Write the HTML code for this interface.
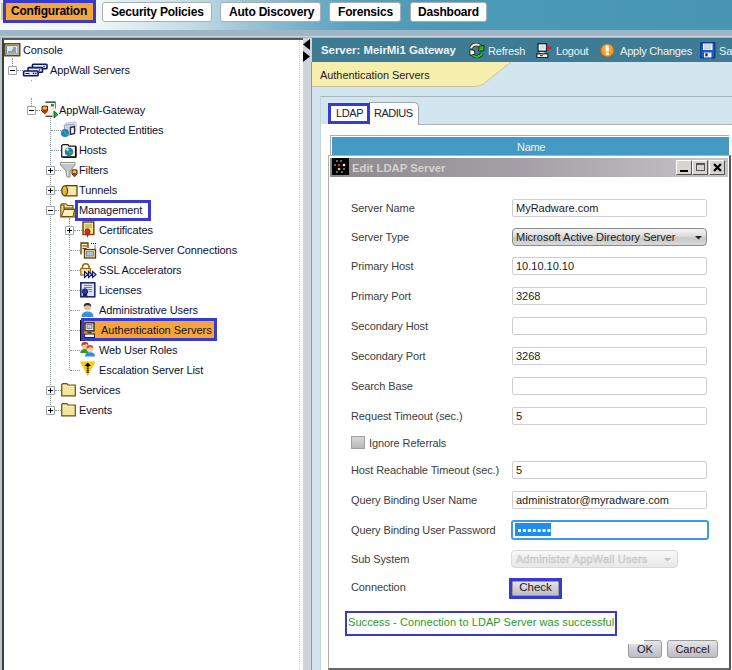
<!DOCTYPE html>
<html><head><meta charset="utf-8">
<style>
*{margin:0;padding:0;box-sizing:border-box}
html,body{width:732px;height:670px;overflow:hidden;background:#d3e5ee;font-family:"Liberation Sans",sans-serif;font-size:11px;color:#222}
.a{position:absolute}
.t{position:absolute;white-space:nowrap;line-height:12px;font-size:11px}
#top{left:0;top:0;width:732px;height:30px;background:linear-gradient(90deg,#f6f9fb 0px,#eef4f7 100px,#c4dce6 190px,#8cbcd0 270px,#5aa2c0 350px,#4b9ab8 430px,#4896b4 732px)}
.btn{position:absolute;top:2px;height:20px;background:#fff;border:1px solid #a9b0b3;border-radius:3px;font-weight:bold;font-size:12px;letter-spacing:-0.2px;line-height:17px;color:#000;white-space:nowrap}
#band{left:0;top:30px;width:732px;height:8px;background:#9fb6c8}
#bandl{left:0;top:36px;width:732px;height:1px;background:#c9d6dc}
#lp{left:0;top:38px;width:303px;height:632px;background:#fff;border-left:4px solid #353d3d;border-top:2px solid #535b58}
#lpe{left:0;top:38px;width:2px;height:632px;background:#bcc6c8}
#div{left:303px;top:38px;width:9px;height:632px;background:#cfd4dc}
#rp{left:312px;top:38px;width:420px;height:632px;background:#d3e5ee}
#hdr{left:312px;top:38px;width:420px;height:24px;background:#3f7b92}
.ht{color:#eef4f6;position:absolute;white-space:nowrap;line-height:12px}
.tree{color:#0c1030}.tree .t{letter-spacing:-0.1px}
.dl{position:absolute;border-left:1px dotted #8a9aa0}
.dh{position:absolute;border-top:1px dotted #8a9aa0}
.pm{position:absolute;width:9px;height:9px;border:1px solid #9aa6ac;background:#fff;border-radius:1px}
.pm:before{content:"";position:absolute;left:1px;top:3px;width:5px;height:1px;background:#000}
.pm.p:after{content:"";position:absolute;left:3px;top:1px;width:1px;height:5px;background:#000}
.lbl{color:#3c3c3c;letter-spacing:-0.1px}
.inp{position:absolute;left:512px;width:195px;height:18px;border:1px solid #d4ccd4;border-radius:2px;background:#fff}
.iv{position:absolute;left:516px;color:#1a1a1a;white-space:nowrap;line-height:12px}
.gbtn{position:absolute;border:1px solid #9a9a9a;border-radius:3px;background:linear-gradient(#e6e6ea,#cfcfd4 50%,#bcbcc4);color:#1a1a1a;text-align:center;line-height:15px}
</style></head><body>
<!-- top bar -->
<div id="top" class="a"></div>
<div class="a" style="left:1px;top:3px;width:2px;height:17px;background:#d8c88a"></div>
<div class="a" style="left:3px;top:0px;width:93px;height:23px;background:#3a3ac8"></div>
<div class="a" style="left:6px;top:3px;width:87px;height:17px;background:#f6a53b"></div>
<div class="t" style="left:11px;top:5px;font-weight:bold;font-size:12px;letter-spacing:-0.2px;color:#000">Configuration</div>
<div class="btn" style="left:102px;width:110px;"><span class="a" style="left:8px;top:1px">Security Policies</span></div>
<div class="btn" style="left:220px;width:101px;"><span class="a" style="left:8px;top:1px">Auto Discovery</span></div>
<div class="btn" style="left:329px;width:72px;"><span class="a" style="left:8px;top:1px">Forensics</span></div>
<div class="btn" style="left:410px;width:77px;"><span class="a" style="left:7px;top:1px">Dashboard</span></div>
<div id="band" class="a"></div>
<div id="bandl" class="a"></div>

<!-- left panel -->
<div id="lp" class="a"></div>
<div id="lpe" class="a"></div>
<div class="a" style="left:299px;top:40px;width:1px;height:630px;border-left:1px dotted #d8c8c8"></div>
<div id="div" class="a"></div>
<svg class="a" style="left:301px;top:38px" width="10" height="26"><path d="M9 1 L2 6.5 L9 12 Z" fill="#000"/><path d="M2 13 L9 18.5 L2 24 Z" fill="#000"/></svg>
<div class="a" style="left:311px;top:62px;width:1px;height:608px;background:#8c9ab4"></div>

<!-- tree -->
<div class="tree">
<svg class="a" style="left:4px;top:43px" width="17" height="14"><rect x="0.75" y="0.75" width="15" height="12" fill="#f2e6a0" stroke="#6a4a10" stroke-width="1.5"/><rect x="2.5" y="2.5" width="11.5" height="8.5" fill="#dde6f6" stroke="#5a8ac0" stroke-width="1"/><path d="M9 5h3M8 7h4M4 9h8" stroke="#556" stroke-width="1"/></svg>
<div class="t" style="left:23px;top:44px">Console</div>
<div class="dl" style="left:12px;top:58px;height:8px"></div>
<div class="pm" style="left:8px;top:66px"></div>
<div class="dh" style="left:17px;top:70px;width:6px"></div>
<svg class="a" style="left:22px;top:63px" width="27" height="14"><rect x="10.5" y="1.2" width="14.5" height="4.6" rx="0.8" fill="#e4e8fa" stroke="#0c1a5a" stroke-width="1.6"/><circle cx="22" cy="3.6" r="0.8" fill="#0c1a5a"/><rect x="6" y="4.6" width="14.5" height="4.6" rx="0.8" fill="#e4e8fa" stroke="#0c1a5a" stroke-width="1.6"/><circle cx="17.5" cy="7" r="0.8" fill="#0c1a5a"/><rect x="1.6" y="8" width="14.5" height="4.8" rx="0.8" fill="#e4e8fa" stroke="#0c1a5a" stroke-width="1.6"/><path d="M3.5 10.5h4" stroke="#0c1a5a" stroke-width="1"/><circle cx="11.5" cy="10.4" r="0.8" fill="#0c1a5a"/><circle cx="13.8" cy="10.4" r="0.8" fill="#0c1a5a"/></svg>
<div class="t" style="left:50px;top:64px">AppWall Servers</div>
<div class="a" style="left:31px;top:80px;width:1px;height:1px;background:#8a9a90"></div>
<div class="dl" style="left:31px;top:98px;height:8px"></div>
<div class="pm" style="left:27px;top:106px"></div>
<div class="dh" style="left:36px;top:110px;width:6px"></div>
<svg class="a" style="left:41px;top:101px" width="18" height="18"><path d="M4.5 1.2h9.5v6.5" fill="none" stroke="#223" stroke-width="1.2"/><rect x="5" y="2" width="9" height="13" fill="#f4f0e4"/><rect x="10" y="3" width="3" height="2.5" fill="#18a018"/><path d="M4.5 15.3h7" stroke="#333" stroke-width="1.2"/><path d="M1 5.5 Q3.5 4.5 6.5 5.5 L6.5 9.5 Q5.5 12 3.7 12.5 Q1.5 11.5 1 9.5 Z" fill="#f0c020" stroke="#302010" stroke-width="1"/><path d="M1.5 8.5 L6 8.5 L6 10 Q5 12 3.7 12 Q2 11 1.5 10Z" fill="#c02818"/><path d="M13 10 L17 13.5 L13 17 Z" fill="#20b030" stroke="#0a4a20" stroke-width="0.8"/></svg>
<div class="t" style="left:59px;top:104px">AppWall-Gateway</div>
<div class="dl" style="left:50px;top:118px;height:289px"></div>
<div class="dh" style="left:51px;top:130px;width:10px"></div>
<div class="dh" style="left:51px;top:150px;width:10px"></div>
<div class="dh" style="left:55px;top:170px;width:6px"></div>
<div class="dh" style="left:55px;top:190px;width:6px"></div>
<div class="dh" style="left:55px;top:210px;width:6px"></div>
<div class="dh" style="left:55px;top:390px;width:6px"></div>
<div class="dh" style="left:55px;top:410px;width:6px"></div>
<div class="pm p" style="left:46px;top:166px"></div>
<div class="pm p" style="left:46px;top:186px"></div>
<div class="pm " style="left:46px;top:206px"></div>
<div class="pm p" style="left:46px;top:386px"></div>
<div class="pm p" style="left:46px;top:406px"></div>
<svg class="a" style="left:60px;top:121px" width="18" height="17"><path d="M6 2 L16 1 L16 10 L8 13Z" fill="#e8ecf4" stroke="#b8c0d0" stroke-width="1"/><path d="M4 4 L14 3 L14 12 L6 15Z" fill="#c8d0e4" stroke="#9aa4c0" stroke-width="1"/><circle cx="5" cy="12" r="4" fill="#2a7ad0"/><path d="M3 10 q2 0 2 2 q1 2 3 1" stroke="#40b040" stroke-width="1.5" fill="none"/><path d="M10.5 6.5 L14.5 5.5 L14.5 12.5 L10.5 13.5Z" fill="#f8f8ff" stroke="#2a2a40" stroke-width="1.3"/></svg>
<div class="t" style="left:79px;top:124px">Protected Entities</div>
<svg class="a" style="left:61px;top:144px" width="16" height="14"><path d="M0.7 1.5 L2 0.7 H7 L8 2.2 H14.5 V12.8 H0.7Z" fill="#f8f8f8" stroke="#1a1a1a" stroke-width="1.2"/><path d="M1.5 13.3 H15.2 V2.5" fill="none" stroke="#000" stroke-width="1"/><circle cx="8" cy="7.8" r="4.3" fill="#2a70d8"/><path d="M5 5.5 q2.5 -1 2.5 2 q2 2.5 4.5 0.5" stroke="#38b038" stroke-width="1.8" fill="none"/><circle cx="6.5" cy="5.5" r="1.2" fill="#f0f0a0"/></svg>
<div class="t" style="left:79px;top:144px">Hosts</div>
<svg class="a" style="left:60px;top:162px" width="18" height="16"><path d="M0.5 0.5 H15 V3 L10 9 V15 L7 15 L6 9 L0.5 3Z" fill="#c4c4c4" stroke="#8a8a8a" stroke-width="1"/><path d="M1 1.5 H14.5" stroke="#f0f0f0" stroke-width="1"/><path d="M7.5 9 L8 14.5" stroke="#eee" stroke-width="1"/><path d="M12 8 Q14.5 7.5 17 8 L17 11.5 Q16 14 14.5 14.5 Q13 14 12 11.5Z" fill="#f0c030" stroke="#302018" stroke-width="1"/><path d="M12.3 11 H16.7 Q16 13.6 14.5 14 Q13 13.6 12.3 11Z" fill="#c02818"/></svg>
<div class="t" style="left:79px;top:164px">Filters</div>
<svg class="a" style="left:61px;top:185px" width="17" height="12"><path d="M3.5 0.7 H16 V10.8 H3.5" fill="#f4e29a" stroke="#5a4010" stroke-width="1.2"/><ellipse cx="3.6" cy="5.75" rx="2.9" ry="5" fill="#e0b848" stroke="#5a4010" stroke-width="1.2"/><path d="M8 3 h6 M8 6 h6 M8 8.5h6" stroke="#fff6c8" stroke-width="1"/></svg>
<div class="t" style="left:79px;top:184px">Tunnels</div>
<svg class="a" style="left:60px;top:203px" width="16" height="15"><path d="M1 2 L2 0.8 H6 L7.5 2.5 H13 V5 H1Z" fill="#f4e6a0" stroke="#6a5010" stroke-width="1.1"/><path d="M0.8 14 V2 H4 V6 H15 V14Z" fill="#f0dc88" stroke="#6a5010" stroke-width="1.1"/><path d="M4 6.5 H14.5 L13 13.5 H1.5Z" fill="#fbf0c0" stroke="#6a5010" stroke-width="1"/></svg>
<div class="a" style="left:75px;top:200px;width:76px;height:21px;border:3px solid #3a3ad0;background:#fff"></div>
<div class="t" style="left:79px;top:204px">Management</div>
<div class="dl" style="left:69px;top:218px;height:152px"></div>
<div class="pm p" style="left:65px;top:226px"></div>
<div class="dh" style="left:74px;top:230px;width:8px"></div>
<div class="dh" style="left:70px;top:250px;width:10px"></div>
<div class="dh" style="left:70px;top:270px;width:10px"></div>
<div class="dh" style="left:70px;top:290px;width:10px"></div>
<div class="dh" style="left:70px;top:310px;width:10px"></div>
<div class="dh" style="left:70px;top:330px;width:10px"></div>
<div class="dh" style="left:70px;top:350px;width:10px"></div>
<div class="dh" style="left:70px;top:370px;width:10px"></div>
<svg class="a" style="left:82px;top:221px" width="13" height="18"><rect x="1" y="1" width="10.8" height="12.5" fill="#f8e49a" stroke="#6a4a10" stroke-width="1.5"/><path d="M3 4h7M3 6h7M3 8h4" stroke="#a8a040" stroke-width="1"/><circle cx="5.5" cy="10.5" r="2.6" fill="#d83020" stroke="#801010" stroke-width="0.8"/><path d="M4 12.5 L5.5 17 L7 12.5Z" fill="#c02020"/></svg>
<div class="t" style="left:99px;top:224px">Certificates</div>
<svg class="a" style="left:80px;top:242px" width="17" height="17"><path d="M1 12.5 V1 H8 V6" fill="#f8eab0" stroke="#5a4010" stroke-width="1.3"/><path d="M2.5 4h4.5M2.5 6.5h4" stroke="#5a4010" stroke-width="1.2"/><path d="M11 1.5h1M13 1.5h1M15 1.5h1M15 3.5v1M15 5.5v1" stroke="#000" stroke-width="1"/><rect x="4.5" y="7.5" width="11" height="8.5" fill="#f8e8a0" stroke="#5a4010" stroke-width="1.3"/><rect x="6.5" y="9.5" width="7" height="4.5" fill="#a8c0e8" stroke="#6a80b0" stroke-width="0.8"/></svg>
<div class="t" style="left:99px;top:244px">Console-Server Connections</div>
<svg class="a" style="left:80px;top:262px" width="17" height="17"><path d="M2.5 6.5 V4.5 A3.3 3.3 0 0 1 9 4.5 V6.5" fill="none" stroke="#9a6a10" stroke-width="1.6"/><rect x="0.8" y="6.5" width="9.5" height="6.5" fill="#f8e8a0" stroke="#9a6a10" stroke-width="1.2"/><path d="M4.5 9.5 L8 12.5 L4.5 15.5Z M8.5 9.5 L12 12.5 L8.5 15.5Z M12.5 9.5 L16 12.5 L12.5 15.5Z" fill="#c8d8f0" stroke="#101a6a" stroke-width="1.1"/></svg>
<div class="t" style="left:99px;top:264px">SSL Accelerators</div>
<svg class="a" style="left:80px;top:282px" width="16" height="16"><rect x="0.8" y="0.8" width="14" height="14" fill="#dde4f8" stroke="#1a2060" stroke-width="1.5"/><path d="M4 3.5h8M4 5.5h8M8 7.5h4M9 9.5h3" stroke="#6a80c0" stroke-width="1"/><circle cx="5" cy="9.5" r="2.8" fill="#2a3890" stroke="#101860" stroke-width="0.8"/><path d="M3 11.5 L2.5 15.5 L5 14 L7.5 15.5 L7 11.5Z" fill="#1a2060"/></svg>
<div class="t" style="left:99px;top:284px">Licenses</div>
<svg class="a" style="left:81px;top:302px" width="14" height="16"><circle cx="6.5" cy="5" r="3.5" fill="#e8c0a0"/><path d="M2.8 5 Q2.5 0.8 6.5 1 Q10.5 0.8 10.3 5 Q9.5 2.8 6.5 3.2 Q3.8 3 2.8 5Z" fill="#283028"/><path d="M0.5 15 Q0.5 9.5 6.5 9.5 Q12.5 9.5 12.5 15Z" fill="#3a90e0"/><path d="M5.5 9.5 L6.5 11 L7.5 9.5Z" fill="#f8a030"/></svg>
<div class="t" style="left:99px;top:304px">Administrative Users</div>
<div class="a" style="left:81px;top:318px;width:136px;height:23px;background:#3a3ad0"></div>
<div class="a" style="left:80px;top:320px;width:1px;height:21px;background:#000"></div>
<div class="a" style="left:84px;top:321px;width:130px;height:17px;background:#f6a53b"></div>
<svg class="a" style="left:84px;top:322px" width="11" height="16"><rect x="1" y="0.8" width="9" height="8" fill="#f0f0f0" stroke="#222" stroke-width="1.3"/><rect x="3" y="2.6" width="5" height="4" fill="#b8c8e0" stroke="#555" stroke-width="0.6"/><path d="M3.5 10.5h4" stroke="#333" stroke-width="1"/><rect x="0.6" y="12" width="10" height="3.5" fill="#f4f4f4" stroke="#222" stroke-width="1"/></svg>
<div class="t" style="left:101px;top:324px;letter-spacing:0">Authentication Servers</div>
<svg class="a" style="left:80px;top:341px" width="16" height="16"><circle cx="5" cy="5" r="3.3" fill="#f0c8a0"/><path d="M1.5 5 Q1 0.5 5 1 Q8.5 0.5 8.5 4 Q6 2 1.5 5Z" fill="#b85018"/><path d="M0.3 12 Q0.3 8 5 8 Q8 8 8.5 10 L8.5 12Z" fill="#28a028"/><circle cx="10" cy="8" r="3.3" fill="#f4d0b0"/><path d="M6.5 8 Q6 3.5 10 4 Q13.5 3.5 13.5 7.5 Q11 5 6.5 8Z" fill="#c86020"/><path d="M5 15.5 Q5 11.3 10 11.3 Q15 11.3 15 15.5Z" fill="#3a88e0"/></svg>
<div class="t" style="left:99px;top:344px">Web User Roles</div>
<svg class="a" style="left:80px;top:361px" width="16" height="16"><path d="M0 0.5 H15.5 L7.75 15.5Z" fill="#f8cc10"/><path d="M7.75 1.5 L4.5 5 H6.8 V6 H8.7 V5 H11Z" fill="#000"/><path d="M7.75 6.5 V12" stroke="#000" stroke-width="2" stroke-dasharray="1.2 0.8"/></svg>
<div class="t" style="left:99px;top:364px">Escalation Server List</div>
<svg class="a" style="left:61px;top:383px" width="16" height="14"><path d="M0.7 12.8 V1.5 L1.8 0.7 H5.8 L7 2 H14.3 V12.8Z" fill="#f4e49c" stroke="#6a5010" stroke-width="1.2"/><path d="M2 3.5 H13" stroke="#fff4c0" stroke-width="1"/></svg>
<div class="t" style="left:79px;top:384px">Services</div>
<svg class="a" style="left:61px;top:403px" width="16" height="14"><path d="M0.7 12.8 V1.5 L1.8 0.7 H5.8 L7 2 H14.3 V12.8Z" fill="#f4e49c" stroke="#6a5010" stroke-width="1.2"/><path d="M2 3.5 H13" stroke="#fff4c0" stroke-width="1"/></svg>
<div class="t" style="left:79px;top:404px">Events</div>
</div>
<!-- right panel -->
<div id="hdr" class="a"></div>
<div class="ht" style="left:321px;top:44px;font-weight:bold;font-size:11.4px">Server: MeirMi1 Gateway</div>
<svg class="a" style="left:469px;top:43px" width="16" height="15"><path d="M1.8 5 Q4 1 8 1.5 Q11 2 12.5 5" fill="none" stroke="#1a2a20" stroke-width="3.6"/><path d="M1.8 5 Q4 1 8 1.5 Q11 2 12.5 5" fill="none" stroke="#f4f4c0" stroke-width="2"/><path d="M10 3 L15 2.5 L15 8 L9.5 8Z" fill="#28b828" stroke="#1a2a20" stroke-width="1"/><path d="M13 10.5 Q11 14 7 13.8 Q4 13.5 2.8 10" fill="none" stroke="#1a2a20" stroke-width="3.6"/><path d="M13 10.5 Q11 14 7 13.8 Q4 13.5 2.8 10" fill="none" stroke="#30c030" stroke-width="2"/><path d="M5.5 7.5 L0.8 6.5 L1 12.5 L6 11Z" fill="#f8f8e8" stroke="#1a2a20" stroke-width="1"/></svg>
<div class="ht" style="left:488px;top:45px;letter-spacing:-0.2px">Refresh</div>
<svg class="a" style="left:536px;top:43px" width="17" height="15"><rect x="2" y="0.7" width="8.5" height="7.5" fill="#fff" stroke="#222" stroke-width="1.3"/><rect x="3.8" y="2.4" width="5" height="4" fill="#c8e0e8"/><path d="M4 9.8h4.5" stroke="#fff" stroke-width="1.2"/><rect x="0.8" y="10.8" width="11" height="3.8" fill="#f4f4f4" stroke="#222" stroke-width="1.2"/><path d="M4 12.7h3" stroke="#222" stroke-width="1"/><path d="M10.5 4.5 L13.5 2 V3.8 H16 V5.8 H13.5 V7.5Z" fill="#e02020"/></svg>
<div class="ht" style="left:556px;top:45px;letter-spacing:-0.2px">Logout</div>
<svg class="a" style="left:600px;top:43px" width="15" height="15"><circle cx="7.3" cy="7.3" r="6.6" fill="#f09a28" stroke="#b86a10" stroke-width="1"/><circle cx="6.5" cy="6" r="4" fill="#f8b850" opacity="0.6"/><rect x="5.8" y="2.5" width="3" height="6" rx="1" fill="#fff"/><rect x="5.8" y="9.5" width="3" height="2.6" fill="#fff"/></svg>
<div class="ht" style="left:620px;top:45px;letter-spacing:-0.2px">Apply Changes</div>
<svg class="a" style="left:700px;top:42px" width="16" height="17"><rect x="0.8" y="0.8" width="14" height="15" fill="#1a5ac8" stroke="#0a3a98" stroke-width="1.3"/><rect x="3" y="1.5" width="9.5" height="6.5" fill="#f8f8f8"/><path d="M4 3h7.5M4 5h7.5M4 6.8h7" stroke="#a0a8b8" stroke-width="0.8"/><rect x="4" y="10.5" width="7.5" height="5" fill="#f0f0f8"/><rect x="5.3" y="11.3" width="2.3" height="3" fill="#0a2a80"/></svg>
<div class="ht" style="left:719px;top:45px;letter-spacing:-0.2px">Save</div>

<!-- yellow band -->
<svg class="a" style="left:312px;top:62px" width="420" height="26"><path d="M0 0 H199 L172 22 Q168 25 163 25 H0 Z" fill="#f6eeac"/><path d="M0 24.5 H163 Q168 24.5 172 21.5 L199 0" stroke="#c8c0a0" stroke-width="1" fill="none"/></svg>
<div class="t" style="left:320px;top:69px;font-size:10.9px;color:#222">Authentication Servers</div>

<!-- content panel -->
<div class="a" style="left:320px;top:96px;width:412px;height:574px;border-left:1px solid #c4d4dc;border-top:1px solid #a8b8c0;background:#d3e5ee"></div>
<div class="a" style="left:321px;top:124px;width:411px;height:546px;background:#fff"></div>
<!-- tabs -->
<div class="a" style="left:419px;top:124px;width:313px;height:1px;background:#a8b4bc"></div>
<div class="a" style="left:369px;top:102px;width:50px;height:23px;background:#fff;border:1px solid #9aa8ae;border-bottom:none;border-radius:0 5px 0 0"></div>
<div class="t" style="left:374px;top:107px;color:#222;letter-spacing:-0.5px">RADIUS</div>
<div class="a" style="left:328px;top:103px;width:42px;height:21px;border:3px solid #3a3ad0;background:#fff"></div>
<div class="t" style="left:336px;top:107px;color:#222;letter-spacing:-0.4px">LDAP</div>
<!-- table header -->
<div class="a" style="left:330px;top:135px;width:399px;height:21px;background:#449ac2;border-top:1px solid #b4aca8;border-left:1px solid #b4aca8;box-shadow:inset 1px 1px 0 #fff"></div>
<div class="ht" style="left:517px;top:141px;letter-spacing:-0.3px">Name</div>

<!-- dialog -->
<div class="a" style="left:328px;top:155px;width:403px;height:515px;background:#fff;border:1px solid #b0b0b0;border-right:2px solid #555;border-bottom:2px solid #666"></div>
<div class="a" style="left:330px;top:158px;width:398px;height:19px;background:linear-gradient(90deg,#8c8a8e,#a4a2a8 50%,#c6c4c8)"></div>
<svg class="a" style="left:332px;top:158px" width="17" height="17"><rect width="17" height="17" fill="#000"/><circle cx="5" cy="3" r="1" fill="#888"/><circle cx="9" cy="3" r="1" fill="#888"/><circle cx="3" cy="7" r="1" fill="#888"/><circle cx="7" cy="7" r="1.3" fill="#d03030"/><circle cx="12" cy="7" r="1.3" fill="#fff"/><circle cx="7" cy="11" r="1.3" fill="#f0c020"/><circle cx="12" cy="11" r="1" fill="#888"/><circle cx="5" cy="14" r="1" fill="#888"/><circle cx="10" cy="14" r="1" fill="#4a8"/></svg>
<div class="t" style="left:352px;top:162px;font-weight:bold;font-size:11.3px;color:#d4d2cc">Edit LDAP Server</div>
<!-- window buttons -->
<div class="a" style="left:676px;top:160px;width:16px;height:15px;background:#d8d4d0;border:1px solid;border-color:#fff #555 #555 #fff"></div>
<div class="a" style="left:680px;top:170px;width:8px;height:2px;background:#000"></div>
<div class="a" style="left:692px;top:160px;width:16px;height:15px;background:#d8d4d0;border:1px solid;border-color:#fff #555 #555 #fff"></div>
<div class="a" style="left:696px;top:163px;width:9px;height:8px;border:1px solid #555;border-top-width:2px"></div>
<div class="a" style="left:709px;top:160px;width:16px;height:15px;background:#d8d4d0;border:1px solid;border-color:#fff #555 #555 #fff"></div>
<svg class="a" style="left:712px;top:162px" width="11" height="11"><path d="M2 2L9 9M9 2L2 9" stroke="#000" stroke-width="2.3"/></svg>

<!-- form -->
<div class="t lbl" style="left:351px;top:202px">Server Name</div>
<div class="inp" style="top:199px"></div><div class="iv" style="top:202px">MyRadware.com</div>
<div class="t lbl" style="left:351px;top:231px">Server Type</div>
<div class="a" style="left:512px;top:228px;width:195px;height:18px;border:1px solid #8c8c8c;border-radius:4px;background:linear-gradient(#f4f4f4,#dcdcdc 45%,#c8c8c8 55%,#d8d8d8)"></div>
<div class="iv" style="top:231px">Microsoft Active Directory Server</div>
<svg class="a" style="left:695px;top:236px" width="7" height="4"><path d="M0 0h7l-3.5 3.5z" fill="#222"/></svg>
<div class="t lbl" style="left:351px;top:260px">Primary Host</div>
<div class="inp" style="top:257px"></div><div class="iv" style="top:260px">10.10.10.10</div>
<div class="t lbl" style="left:351px;top:290px">Primary Port</div>
<div class="inp" style="top:287px"></div><div class="iv" style="top:290px">3268</div>
<div class="t lbl" style="left:351px;top:320px">Secondary Host</div>
<div class="inp" style="top:317px"></div>
<div class="t lbl" style="left:351px;top:350px">Secondary Port</div>
<div class="inp" style="top:347px"></div><div class="iv" style="top:350px">3268</div>
<div class="t lbl" style="left:351px;top:380px">Search Base</div>
<div class="inp" style="top:377px"></div>
<div class="t lbl" style="left:351px;top:410px">Request Timeout (sec.)</div>
<div class="inp" style="top:407px"></div><div class="iv" style="top:410px">5</div>
<div class="a" style="left:351px;top:436px;width:14px;height:13px;border:1px solid #a0a0a0;background:linear-gradient(#d8d8d8,#b8b8b8)"></div>
<div class="t lbl" style="left:369px;top:437px">Ignore Referrals</div>
<div class="t lbl" style="left:351px;top:464px">Host Reachable Timeout (sec.)</div>
<div class="inp" style="top:461px"></div><div class="iv" style="top:464px">5</div>
<div class="t lbl" style="left:351px;top:494px">Query Binding User Name</div>
<div class="inp" style="top:491px"></div><div class="iv" style="top:494px">administrator@myradware.com</div>
<div class="t lbl" style="left:351px;top:524px">Query Binding User Password</div>
<div class="a" style="left:511px;top:520px;width:198px;height:20px;border:2px solid #3a9af0;border-radius:3px;background:#fff"></div>
<div class="a" style="left:515px;top:523px;width:36px;height:13px;background:#1e8cf0"></div>
<svg class="a" style="left:517px;top:529px" width="36" height="4"><rect x="1.0" y="0" width="3" height="3" fill="#fff"/><rect x="5.9" y="0" width="3" height="3" fill="#fff"/><rect x="10.8" y="0" width="3" height="3" fill="#fff"/><rect x="15.7" y="0" width="3" height="3" fill="#fff"/><rect x="20.6" y="0" width="3" height="3" fill="#fff"/><rect x="25.5" y="0" width="3" height="3" fill="#fff"/><rect x="30.4" y="0" width="3" height="3" fill="#fff"/></svg>
<div class="t lbl" style="left:351px;top:553px">Sub System</div>
<div class="a" style="left:511px;top:550px;width:167px;height:18px;border:1px solid #d8d8d8;border-radius:4px;background:linear-gradient(#f8f8f8,#e8e8e8)"></div>
<div class="iv" style="left:516px;top:553px;color:#e4e4e4;letter-spacing:0.2px;-webkit-text-stroke:0.5px #c4c4c4">Administer AppWall Users</div>
<svg class="a" style="left:664px;top:558px" width="7" height="4"><path d="M0 0h7l-3.5 3.5z" fill="#c0c0c0"/></svg>
<div class="t lbl" style="left:351px;top:581px">Connection</div>
<div class="a" style="left:509px;top:578px;width:53px;height:21px;background:#3a3ad0"></div>
<div class="gbtn" style="left:512px;top:581px;width:47px;height:15px;line-height:10px;border-radius:1px;font-size:11.5px">Check</div>
<div class="a" style="left:345px;top:611px;width:272px;height:25px;border:2px solid #3a3ac8"></div>
<div class="t" style="left:348px;top:616px;color:#289a28;letter-spacing:0.06px">Success - Connection to LDAP Server was successful</div>
<div class="gbtn" style="left:628px;top:640px;width:34px;height:18px;line-height:16px">OK</div>
<div class="a" style="left:627px;top:639px;width:17px;height:5px;background:#fff"></div>
<div class="gbtn" style="left:667px;top:640px;width:51px;height:18px;line-height:16px">Cancel</div>
</body></html>
